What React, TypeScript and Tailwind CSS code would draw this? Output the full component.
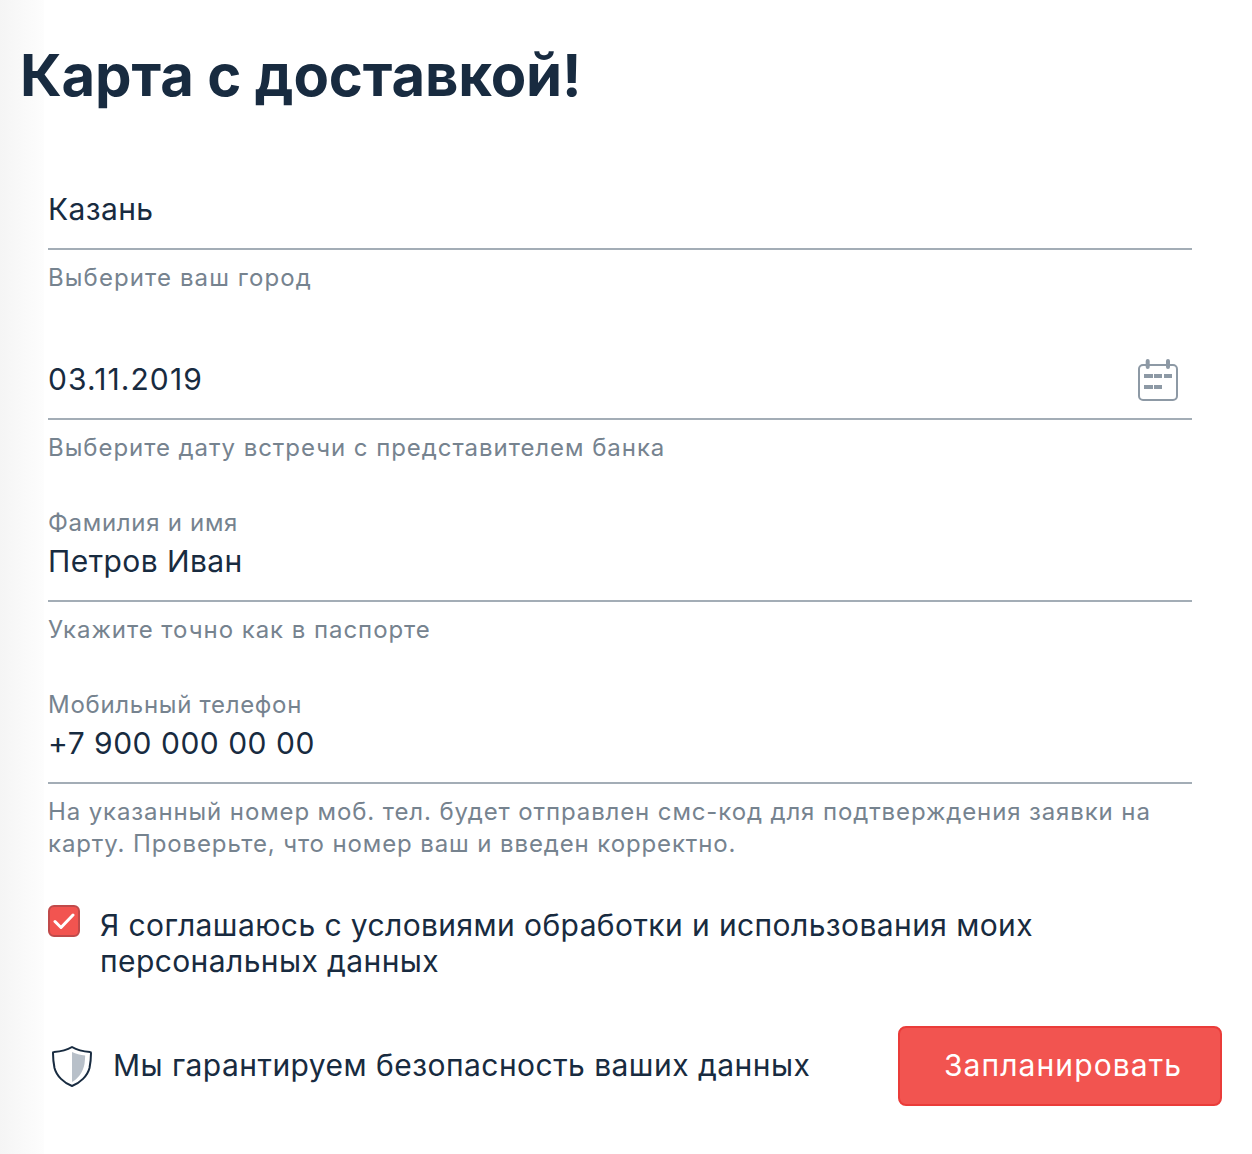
const Calendar = () => (
  <svg width="42" height="43" viewBox="0 0 42 43" fill="none" className="mb-[16px] mr-[13px]">
    <rect x="2" y="6" width="38" height="35" rx="4" stroke="#8d99a5" strokeWidth="2" />
    <path d="M10.700 2v6M31 2v6" stroke="#8d99a5" strokeWidth="4" strokeLinecap="round" />
    <path d="M7 15h9v4H7zM17 15h8v4h-8zM27 15h8v4h-8zM7 26h9v4H7zM17 26h8v4h-8z" fill="#8d99a5" />
  </svg>
);

const Shield = () => (
  <svg width="42" height="42" viewBox="0 0 42 42" fill="none" className="shrink-0">
    <path d="M21 7v30c6-3 11-10 12.500-18 .4-3 .6-6 .7-8.500C29 10 25 9 21 7z" fill="#b8c0c9" />
    <path
      d="M21 2c5 3 11 4.500 18 5 .8 0 1 .4 1 1 0 5-.5 10-1.500 15C36.500 31 29 38 21 41 13 38 5.500 31 3.500 23 2.500 18 2 13 2 8c0-.6.2-1 1-1 7-.5 13-2 18-5z"
      stroke="#182b40"
      strokeWidth="2"
      strokeLinejoin="round"
    />
  </svg>
);

const Check = () => (
  <svg width="22" height="18" viewBox="0 0 22 18" fill="none">
    <path d="M2 9.500l6 6L20 3" stroke="#fff" strokeWidth="3" strokeLinecap="round" strokeLinejoin="round" />
  </svg>
);

type FieldProps = {
  label?: string;
  value: string;
  hint: React.ReactNode;
  icon?: React.ReactNode;
  valueClass?: string;
  hintClass?: string;
  className?: string;
};

const Field = ({ label, value, hint, icon, valueClass, hintClass, className }: FieldProps) => (
  <div className={className}>
    {label && <div className="text-[24px] leading-[32px] tracking-[0.7px] text-[#76838f]">{label}</div>}
    <div className="flex items-end justify-between border-b-2 border-[#a3adb6]">
      <div className={`text-[30px] leading-[40px] text-[#182b40] ${label ? "h-[61px] pt-[2px]" : "h-[59px]"} ${valueClass}`}>
        {value}
      </div>
      {icon}
    </div>
    <div className={`mt-[12px] text-[24px] leading-[32px] text-[#76838f] ${hintClass}`}>{hint}</div>
  </div>
);

export default function App() {
  return (
    <div className="min-h-[1154px] bg-[linear-gradient(90deg,#f5f5f5_0,#fdfdfd_44px,#ffffff_44px)] font-['Inter',sans-serif]">
      <div className="pl-[48px] pr-[60px] pt-[37px]">
        <h1 className="-ml-[28px] text-[58px] font-bold leading-[76px] tracking-[-0.15px] text-[#182b40]">
          Карта с доставкой!
        </h1>
        <Field
          className="mt-[76px]"
          value="Казань"
          valueClass="tracking-[0.37px]"
          hint="Выберите ваш город"
          hintClass="tracking-[1.1px]"
        />
        <Field
          className="mt-[65px]"
          value="03.11.2019"
          valueClass="tracking-[1.1px]"
          hint="Выберите дату встречи с представителем банка"
          hintClass="tracking-[0.95px]"
          icon={<Calendar />}
        />
        <Field
          className="mt-[43px]"
          label="Фамилия и имя"
          value="Петров Иван"
          valueClass="tracking-[0.42px]"
          hint="Укажите точно как в паспорте"
          hintClass="tracking-[0.95px]"
        />
        <Field
          className="mt-[43px]"
          label="Мобильный телефон"
          value="+7 900 000 00 00"
          valueClass="tracking-[0.5px]"
          hintClass="tracking-[0.88px]"
          hint={
            <>
              На указанный номер моб. тел. будет отправлен смс-код для подтверждения заявки на
              <br />
              карту. Проверьте, что номер ваш и введен корректно.
            </>
          }
        />
        <div className="mt-[47px] flex items-start">
          <div className="-mt-[2px] flex h-[32px] w-[32px] shrink-0 items-center justify-center rounded-[6px] border-2 border-[#c04a4a] bg-[#f25450]">
            <Check />
          </div>
          <div className="ml-[20px] text-[30px] leading-[36px] tracking-[0.4px] text-[#182b40]">
            Я соглашаюсь с условиями обработки и использования моих
            <br />
            персональных данных
          </div>
        </div>
        <div className="-mr-[30px] mt-[47px] flex items-center justify-between">
          <div className="flex items-center">
            <div className="ml-[3px]">
              <Shield />
            </div>
            <div className="ml-[20px] pb-[2px] text-[30px] leading-[40px] tracking-[0.46px] text-[#182b40]">
              Мы гарантируем безопасность ваших данных
            </div>
          </div>
          <button className="flex h-[80px] w-[324px] items-center justify-center rounded-[8px] border-2 border-[#ea3c39] bg-[#f25450] pb-[2px] pl-[6px] text-[30px] tracking-[1.1px] text-white">
            Запланировать
          </button>
        </div>
      </div>
    </div>
  );
}
